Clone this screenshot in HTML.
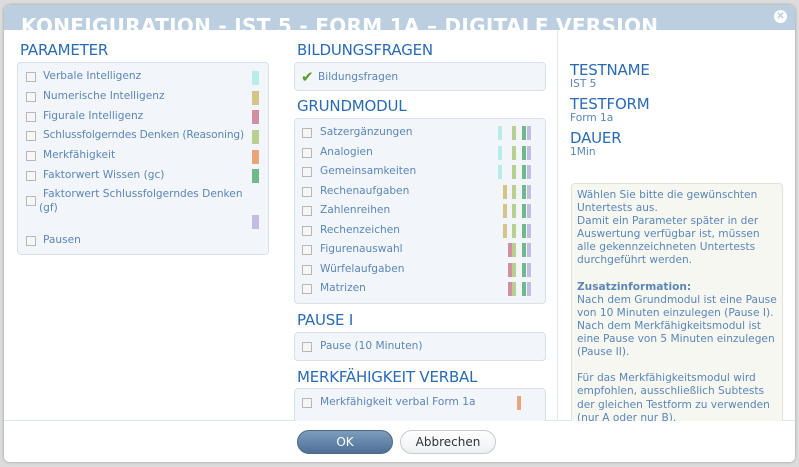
<!DOCTYPE html>
<html><head><meta charset="utf-8"><style>
*{margin:0;padding:0;box-sizing:border-box}
body{width:799px;height:467px;overflow:hidden;background:#dcdcdc;font-family:"DejaVu Sans",Verdana,sans-serif;position:relative}
.a{position:absolute}
#dlg{left:4px;top:5px;width:791px;height:457px;background:#fff;border-radius:6px;overflow:hidden;box-shadow:0 0 3px rgba(0,0,0,.3)}
#hdr{left:0;top:0;width:791px;height:25px;background:#bccfe0;overflow:hidden}
#hdr span{position:absolute;left:17px;top:9px;font:bold 20px "DejaVu Sans",sans-serif;color:#fff;letter-spacing:.3px;white-space:nowrap}
#x{right:8px;top:5px;width:13px;height:13px;border-radius:50%;background:#fff;color:#bccfe0;font:bold 10px/13px sans-serif;text-align:center}
h2{position:absolute;font:15px "DejaVu Sans",sans-serif;color:#2a6ab5;white-space:nowrap;letter-spacing:-.2px}
.box{position:absolute;background:#f2f5f9;border:1px solid #d9e0e8;border-radius:4px}
.r{position:absolute;font-size:10.6px;color:#5a86b8;white-space:nowrap}
.cb{position:absolute;width:10px;height:10px;border:1px solid #b8b8b8;background:#f6f6f6}
.bar{position:absolute;width:7px;height:14px}
.t{position:absolute;width:4px;height:14px}
.info{position:absolute;left:567px;top:178px;width:212px;height:260px;background:#f6f7f0;border:1px solid #e2e3d8;border-radius:4px;padding:5px 5px;font-size:10.6px;line-height:13.1px;color:#5a86b8}
.btn{position:absolute;top:425px;height:24px;border-radius:12px;font-size:12px;text-align:center;line-height:22px}
</style></head><body>
<div id="dlg" class="a">
<div id="hdr" class="a"><span>KONFIGURATION - IST 5 - FORM 1A – DIGITALE VERSION</span><div id="x" class="a">✕</div></div>
<div class="a" style="left:553px;top:25px;width:1px;height:390px;background:#e2e6ea"></div>
<div class="a" style="left:0;top:415px;width:791px;height:1px;background:#dde5ee"></div>

<h2 style="left:16px;top:36px">PARAMETER</h2>
<div class="box" style="left:13px;top:57px;width:252px;height:193px"></div>

<h2 style="left:293px;top:36px">BILDUNGSFRAGEN</h2>
<div class="box" style="left:290px;top:57px;width:252px;height:29px"></div>
<h2 style="left:293px;top:92px">GRUNDMODUL</h2>
<div class="box" style="left:290px;top:113px;width:252px;height:186px"></div>
<h2 style="left:293px;top:306px">PAUSE I</h2>
<div class="box" style="left:290px;top:327px;width:252px;height:29px"></div>
<h2 style="left:293px;top:363px">MERKFÄHIGKEIT VERBAL</h2>
<div class="box" style="left:290px;top:383px;width:252px;height:40px"></div>

<h2 style="left:566px;top:56px">TESTNAME</h2><div class="r" style="left:566px;top:73px">IST 5</div>
<h2 style="left:566px;top:90px">TESTFORM</h2><div class="r" style="left:566px;top:107px">Form 1a</div>
<h2 style="left:566px;top:124px">DAUER</h2><div class="r" style="left:566px;top:141px">1Min</div>
<div class="info">Wählen Sie bitte die gewünschten Untertests aus.<br>Damit ein Parameter später in der Auswertung verfügbar ist, müssen alle gekennzeichneten Untertests durchgeführt werden.<br><br><b>Zusatzinformation:</b><br>Nach dem Grundmodul ist eine Pause von 10 Minuten einzulegen (Pause I). Nach dem Merkfähigkeitsmodul ist eine Pause von 5 Minuten einzulegen (Pause II).<br><br>Für das Merkfähigkeitsmodul wird empfohlen, ausschließlich Subtests der gleichen Testform zu verwenden (nur A oder nur B).</div>
<div class="a" style="left:0;top:416px;width:791px;height:41px;background:#fff"></div>
<div class="btn" style="left:293px;width:96px;background:linear-gradient(#7d9dbd,#4c6f93);color:#fff;border:1px solid #4a6a8a">OK</div>
<div class="btn" style="left:396px;width:96px;background:linear-gradient(#fff,#eef0f2);color:#333;border:1px solid #c6ccd2">Abbrechen</div>
</div>

<div class="a" style="left:0;top:0;width:799px;height:467px" id="rows">
<div class="cb" style="left:26px;top:72px"></div><div class="r" style="left:43px;top:70px">Verbale Intelligenz</div><div class="bar" style="left:252px;top:71px;background:#b8ece6"></div>
<div class="cb" style="left:26px;top:92px"></div><div class="r" style="left:43px;top:90px">Numerische Intelligenz</div><div class="bar" style="left:252px;top:91px;background:#d4c48a"></div>
<div class="cb" style="left:26px;top:112px"></div><div class="r" style="left:43px;top:110px">Figurale Intelligenz</div><div class="bar" style="left:252px;top:110px;background:#cf8fa0"></div>
<div class="cb" style="left:26px;top:131px"></div><div class="r" style="left:43px;top:129px;letter-spacing:-.15px">Schlussfolgerndes Denken (Reasoning)</div><div class="bar" style="left:252px;top:130px;background:#b9cf91"></div>
<div class="cb" style="left:26px;top:151px"></div><div class="r" style="left:43px;top:149px">Merkfähigkeit</div><div class="bar" style="left:252px;top:150px;background:#e9a47c"></div>
<div class="cb" style="left:26px;top:171px"></div><div class="r" style="left:43px;top:169px">Faktorwert Wissen (gc)</div><div class="bar" style="left:252px;top:169px;background:#6fb98a"></div>
<div class="cb" style="left:26px;top:196px"></div><div class="r" style="left:43px;top:188px">Faktorwert Schlussfolgerndes Denken</div><div class="r" style="left:39px;top:202px">(gf)</div><div class="bar" style="left:252px;top:215px;background:#c3bde6"></div>
<div class="cb" style="left:26px;top:236px"></div><div class="r" style="left:43px;top:234px">Pausen</div>

<div class="a" style="left:301px;top:68px;color:#5a9a2a;font-size:15px;font-weight:bold">✔</div><div class="r" style="left:318px;top:71px">Bildungsfragen</div>

<div class="cb" style="left:302px;top:128px"></div><div class="r" style="left:320px;top:126px">Satzergänzungen</div>
<div class="cb" style="left:302px;top:148px"></div><div class="r" style="left:320px;top:146px">Analogien</div>
<div class="cb" style="left:302px;top:167px"></div><div class="r" style="left:320px;top:165px">Gemeinsamkeiten</div>
<div class="cb" style="left:302px;top:187px"></div><div class="r" style="left:320px;top:185px">Rechenaufgaben</div>
<div class="cb" style="left:302px;top:206px"></div><div class="r" style="left:320px;top:204px">Zahlenreihen</div>
<div class="cb" style="left:302px;top:226px"></div><div class="r" style="left:320px;top:224px">Rechenzeichen</div>
<div class="cb" style="left:302px;top:245px"></div><div class="r" style="left:320px;top:243px">Figurenauswahl</div>
<div class="cb" style="left:302px;top:265px"></div><div class="r" style="left:320px;top:263px">Würfelaufgaben</div>
<div class="cb" style="left:302px;top:284px"></div><div class="r" style="left:320px;top:282px">Matrizen</div>

<div class="t" style="left:498px;top:126px;background:#b8ece6"></div><div class="t" style="left:512px;top:126px;background:#b9cf91"></div><div class="t" style="left:522px;top:126px;background:#6fb98a"></div><div class="t" style="left:527px;top:126px;background:#c3bde6"></div>
<div class="t" style="left:498px;top:146px;background:#b8ece6"></div><div class="t" style="left:512px;top:146px;background:#b9cf91"></div><div class="t" style="left:522px;top:146px;background:#6fb98a"></div><div class="t" style="left:527px;top:146px;background:#c3bde6"></div>
<div class="t" style="left:498px;top:165px;background:#b8ece6"></div><div class="t" style="left:512px;top:165px;background:#b9cf91"></div><div class="t" style="left:522px;top:165px;background:#6fb98a"></div><div class="t" style="left:527px;top:165px;background:#c3bde6"></div>
<div class="t" style="left:503px;top:185px;background:#d4c48a"></div><div class="t" style="left:512px;top:185px;background:#b9cf91"></div><div class="t" style="left:522px;top:185px;background:#6fb98a"></div><div class="t" style="left:527px;top:185px;background:#c3bde6"></div>
<div class="t" style="left:503px;top:204px;background:#d4c48a"></div><div class="t" style="left:512px;top:204px;background:#b9cf91"></div><div class="t" style="left:522px;top:204px;background:#6fb98a"></div><div class="t" style="left:527px;top:204px;background:#c3bde6"></div>
<div class="t" style="left:503px;top:224px;background:#d4c48a"></div><div class="t" style="left:512px;top:224px;background:#b9cf91"></div><div class="t" style="left:522px;top:224px;background:#6fb98a"></div><div class="t" style="left:527px;top:224px;background:#c3bde6"></div>
<div class="t" style="left:508px;top:243px;background:#cf8fa0"></div><div class="t" style="left:512px;top:243px;background:#b9cf91"></div><div class="t" style="left:522px;top:243px;background:#6fb98a"></div><div class="t" style="left:527px;top:243px;background:#c3bde6"></div>
<div class="t" style="left:508px;top:263px;background:#cf8fa0"></div><div class="t" style="left:512px;top:263px;background:#b9cf91"></div><div class="t" style="left:522px;top:263px;background:#6fb98a"></div><div class="t" style="left:527px;top:263px;background:#c3bde6"></div>
<div class="t" style="left:508px;top:282px;background:#cf8fa0"></div><div class="t" style="left:512px;top:282px;background:#b9cf91"></div><div class="t" style="left:522px;top:282px;background:#6fb98a"></div><div class="t" style="left:527px;top:282px;background:#c3bde6"></div>

<div class="cb" style="left:302px;top:342px"></div><div class="r" style="left:320px;top:340px">Pause (10 Minuten)</div>
<div class="cb" style="left:302px;top:398px"></div><div class="r" style="left:320px;top:396px">Merkfähigkeit verbal Form 1a</div><div class="t" style="left:517px;top:396px;background:#e9a47c"></div>
</div>
</body></html>
